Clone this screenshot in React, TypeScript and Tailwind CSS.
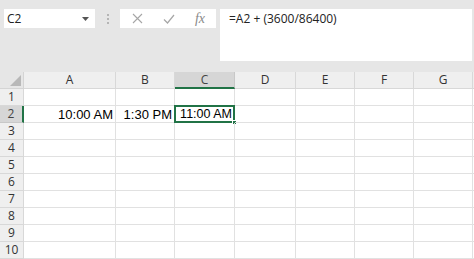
import React from "react";

const cols = [
  { l: "A", w: 92 },
  { l: "B", w: 59 },
  { l: "C", w: 60 },
  { l: "D", w: 61 },
  { l: "E", w: 59 },
  { l: "F", w: 59 },
  { l: "G", w: 59 },
];

const ui = { fontFamily: '"Open Sans", "Noto Sans", sans-serif' };
const cellFont = { fontFamily: '"Liberation Sans", Arial, sans-serif' };

const values: Record<string, string> = {
  "2A": "10:00 AM",
  "2B": "1:30 PM",
  "2C": "11:00 AM",
};

export default function App() {
  const rows = Array.from({ length: 10 }, (_, i) => i + 1);
  return (
    <div className="w-[474px] h-[259px] overflow-hidden bg-[#e6e6e6] flex flex-col" style={ui}>
      {/* Toolbar */}
      <div className="h-[72px] flex items-start pt-[9px] pl-[4px]">
        <div className="w-[91px] h-[19px] bg-white flex items-center justify-between pl-[3px] pr-[6px]">
          <span className="text-[12px] text-[#222] leading-none">C2</span>
          <svg width="7" height="4" viewBox="0 0 7 4">
            <path d="M0 0 L7 0 L3.5 4 Z" fill="#555" />
          </svg>
        </div>
        <div className="w-[25px] h-[19px] flex flex-col items-center justify-center gap-[2px]">
          <div className="w-[2px] h-[2px] bg-[#b5b5b5]" />
          <div className="w-[2px] h-[2px] bg-[#b5b5b5]" />
          <div className="w-[2px] h-[2px] bg-[#b5b5b5]" />
        </div>
        <div className="w-[96px] h-[19px] bg-white flex items-center">
          <div className="w-[34px] flex justify-center">
            <svg width="11" height="11" viewBox="0 0 11 11">
              <path d="M1 1 L10 10 M10 1 L1 10" stroke="#a6a6a6" strokeWidth="1.1" fill="none" />
            </svg>
          </div>
          <div className="w-[30px] flex justify-center">
            <svg width="12" height="10" viewBox="0 0 12 10">
              <path d="M1 5.5 L4.5 9 L11 1" stroke="#a6a6a6" strokeWidth="1.2" fill="none" />
            </svg>
          </div>
          <div className="w-[32px] flex justify-center">
            <span
              className="text-[14px] italic text-[#8a8a8a] leading-none"
              style={{ fontFamily: '"Liberation Serif", "Times New Roman", serif' }}
            >
              fx
            </span>
          </div>
        </div>
        <div className="ml-[4px] w-[252px] h-[52px] bg-white pl-[9px]">
          <div className="h-[19px] flex items-center">
            <span className="text-[12px] text-[#222] leading-none">=A2 + (3600/86400)</span>
          </div>
        </div>
      </div>

      {/* Grid */}
      <div
        className="grid bg-white"
        style={{ gridTemplateColumns: `24px ${cols.map((c) => c.w + "px").join(" ")} 1fr` }}
      >
        {/* header row */}
        <div className="h-[17px] bg-[#e6e6e6] border-r border-b border-[#d4d4d4] relative">
          <svg className="absolute right-[2px] bottom-[2px]" width="11" height="11" viewBox="0 0 11 11">
            <path d="M11 0 L11 11 L0 11 Z" fill="#b8b8b8" />
          </svg>
        </div>
        {cols.map((c) => (
          <div
            key={c.l}
            className={
              c.l === "C"
                ? "h-[17px] bg-[#d6d6d6] border-r border-[#c8c8c8] border-b-2 border-b-[#217346] flex items-center justify-center text-[12px] text-[#444]"
                : "h-[17px] bg-[#efefef] border-r border-b border-[#d8d8d8] flex items-center justify-center text-[12px] text-[#333]"
            }
          >
            {c.l}
          </div>
        ))}
        <div className="h-[17px] bg-[#efefef] border-b border-[#d8d8d8]" />

        {rows.map((r) => (
          <React.Fragment key={r}>
            <div
              className={
                r === 2
                  ? "h-[17px] bg-[#d6d6d6] border-r-2 border-r-[#217346] border-b border-[#c8c8c8] flex items-center justify-center text-[12px] text-[#444]"
                  : "h-[17px] bg-[#efefef] border-r border-b border-[#d8d8d8] flex items-center justify-center text-[12px] text-[#333]"
              }
            >
              {r}
            </div>
            {cols.map((c) => {
              const v = values[`${r}${c.l}`];
              const sel = r === 2 && c.l === "C";
              return (
                <div
                  key={c.l}
                  className="h-[17px] border-r border-b border-[#e1e1e1] relative flex items-center justify-end pr-[2px]"
                  style={cellFont}
                >
                  {v && (
                    <span className={sel ? "text-[12.5px] text-black leading-none" : "text-[13px] text-black leading-none"}>
                      {v}
                    </span>
                  )}
                  {sel && (
                    <>
                      <div className="absolute -top-px -left-px -right-px -bottom-px border-2 border-[#217346]" />
                      <div className="absolute -right-[3px] -bottom-[3px] w-[5px] h-[5px] bg-[#217346] border border-white" />
                    </>
                  )}
                </div>
              );
            })}
            <div className="h-[17px] border-b border-[#e1e1e1]" />
          </React.Fragment>
        ))}
      </div>
    </div>
  );
}
